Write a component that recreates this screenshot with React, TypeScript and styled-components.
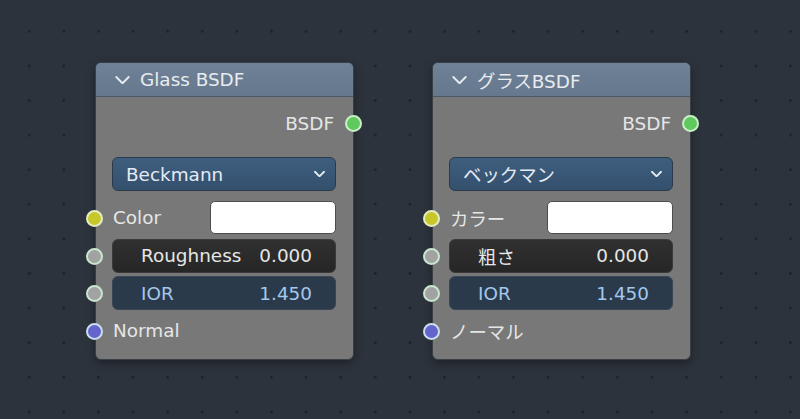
import React from 'react';
import styled, {createGlobalStyle} from 'styled-components';

const GlobalStyle = createGlobalStyle`
  html, body {
    margin: 0;
    padding: 0;
    background: #2c333c;
  }
  body {
    font-family: "DejaVu Sans", "Noto Sans CJK JP", sans-serif;
  }
`;

type SocketKind = 'shader' | 'color' | 'float' | 'vector';

const socketColors: Record<SocketKind, string> = {
    shader: '#5fc95f',
    color: '#c8c72a',
    float: '#a2a2a2',
    vector: '#6464cc',
};

const socketRings: Record<SocketKind, string> = {
    shader: '#c9efc6',
    color: '#e4ecc6',
    float: '#c9e6cf',
    vector: '#c9dff0',
};

interface NodeData {
    title: string;
    dist: string;
    color: string;
    roughness: string;
    ior: string;
    normal: string;
}

const nodes: NodeData[] = [
    {title: 'Glass BSDF', dist: 'Beckmann', color: 'Color', roughness: 'Roughness', ior: 'IOR', normal: 'Normal'},
    {title: 'グラスBSDF', dist: 'ベックマン', color: 'カラー', roughness: '粗さ', ior: 'IOR', normal: 'ノーマル'},
];

const Chevron: React.FC<{size?: number; weight?: number}> = ({size = 15, weight = 1.8}) => (
    <svg width={size} height={size * 0.55} viewBox="0 0 14 8" fill="none">
        <path d="M1 1 L7 7 L13 1" stroke="currentColor" strokeWidth={weight} strokeLinecap="round" strokeLinejoin="round"/>
    </svg>
);

const App: React.FC = () => {
    return (
        <>
            <GlobalStyle/>
            <StyledCanvas>
                {nodes.map((n) => (
                    <StyledNode key={n.title}>
                        <StyledHeader>
                            <Chevron/>
                            <span>{n.title}</span>
                        </StyledHeader>
                        <StyledBody>
                            <StyledOutputRow>
                                BSDF
                                <StyledSocket kind="shader" side="right"/>
                            </StyledOutputRow>
                            <StyledDropdown>
                                <span>{n.dist}</span>
                                <Chevron size={11} weight={2.4}/>
                            </StyledDropdown>
                            <StyledInputs>
                                <StyledInputRow>
                                    <StyledSocket kind="color" side="left"/>
                                    <StyledLabel>{n.color}</StyledLabel>
                                    <StyledSwatch/>
                                </StyledInputRow>
                                <StyledInputRow>
                                    <StyledSocket kind="float" side="left"/>
                                    <StyledField variant="slider">
                                        <span>{n.roughness}</span>
                                        <span>0.000</span>
                                    </StyledField>
                                </StyledInputRow>
                                <StyledInputRow>
                                    <StyledSocket kind="float" side="left"/>
                                    <StyledField variant="number">
                                        <span>{n.ior}</span>
                                        <span>1.450</span>
                                    </StyledField>
                                </StyledInputRow>
                                <StyledInputRow>
                                    <StyledSocket kind="vector" side="left"/>
                                    <StyledLabel>{n.normal}</StyledLabel>
                                </StyledInputRow>
                            </StyledInputs>
                        </StyledBody>
                    </StyledNode>
                ))}
            </StyledCanvas>
        </>
    );
};

const StyledCanvas = styled.div`
  width: 800px;
  height: 419px;
  box-sizing: border-box;
  padding: 62px 0 0 95px;
  display: flex;
  align-items: flex-start;
  gap: 78px;
  background-color: #2c333c;
  background-image: radial-gradient(circle, rgba(15, 19, 24, 0.55) 1px, transparent 1.6px);
  background-size: 34.6px 34.6px;
  background-position: 12px 14px;
  overflow: hidden;
`;

const StyledNode = styled.div`
  width: 259px;
  height: 298px;
  display: flex;
  flex-direction: column;
  border-radius: 6px;
  background: #787878;
  border: 1px solid #3a3f45;
  box-shadow: 0 3px 8px rgba(0, 0, 0, 0.35);
  box-sizing: border-box;
`;

const StyledHeader = styled.div`
  height: 34px;
  flex: none;
  display: flex;
  align-items: center;
  gap: 10px;
  padding-left: 19px;
  background: linear-gradient(#6f8197, #66788d);
  border-radius: 5px 5px 0 0;
  border-bottom: 1px solid #4c5868;
  color: #e8ecf0;
  font-size: 18.4px;
  box-sizing: border-box;

  svg {
    margin-top: 1px;
  }
`;

const StyledBody = styled.div`
  flex: 1;
  display: flex;
  flex-direction: column;
  padding: 10px 17px 0 16px;
  color: #e6e6e6;
  font-size: 18.4px;
`;

const StyledOutputRow = styled.div`
  position: relative;
  height: 32px;
  display: flex;
  align-items: center;
  justify-content: flex-end;
  margin-right: -17px;
  padding-right: 19px;
`;

const StyledSocket = styled.span<{kind: SocketKind; side: 'left' | 'right'}>`
  position: absolute;
  top: 50%;
  ${({side}) => (side === 'left' ? 'left: -26px;' : 'right: -9px;')}
  width: 13px;
  height: 13px;
  margin-top: -8px;
  border-radius: 50%;
  background: ${({kind}) => socketColors[kind]};
  border: 2px solid ${({kind}) => socketRings[kind]};
`;

const StyledDropdown = styled.div`
  margin-top: 18px;
  height: 34px;
  box-sizing: border-box;
  display: flex;
  align-items: center;
  justify-content: space-between;
  padding: 0 10px 0 13px;
  border-radius: 6px;
  background: linear-gradient(#3f5e7e, #33506d);
  border: 1px solid #2a3a4a;
  color: #e4ebf2;
`;

const StyledInputs = styled.div`
  margin-top: 8px;
  display: grid;
  grid-auto-rows: 37.7px;
`;

const StyledInputRow = styled.div`
  position: relative;
  display: flex;
  align-items: center;
  gap: 10px;
`;

const StyledLabel = styled.span`
  flex: 1;
  white-space: nowrap;
  margin-left: 1px;
`;

const StyledSwatch = styled.div`
  width: 126px;
  height: 33px;
  box-sizing: border-box;
  border-radius: 5px;
  background: #ffffff;
  border: 1px solid #4e4e4e;
`;

const StyledField = styled.div<{variant: 'slider' | 'number'}>`
  flex: 1;
  height: 34px;
  box-sizing: border-box;
  display: flex;
  align-items: center;
  justify-content: space-between;
  padding: 0 23px 0 28px;
  border-radius: 6px;
  background: ${({variant}) => (variant === 'slider' ? 'linear-gradient(#303030, #262626)' : '#2b3a4b')};
  border: 1px solid ${({variant}) => (variant === 'slider' ? '#3a3a3a' : '#3a4656')};
  color: ${({variant}) => (variant === 'slider' ? '#e6e6e6' : '#a2c8ee')};
`;

export default App;
